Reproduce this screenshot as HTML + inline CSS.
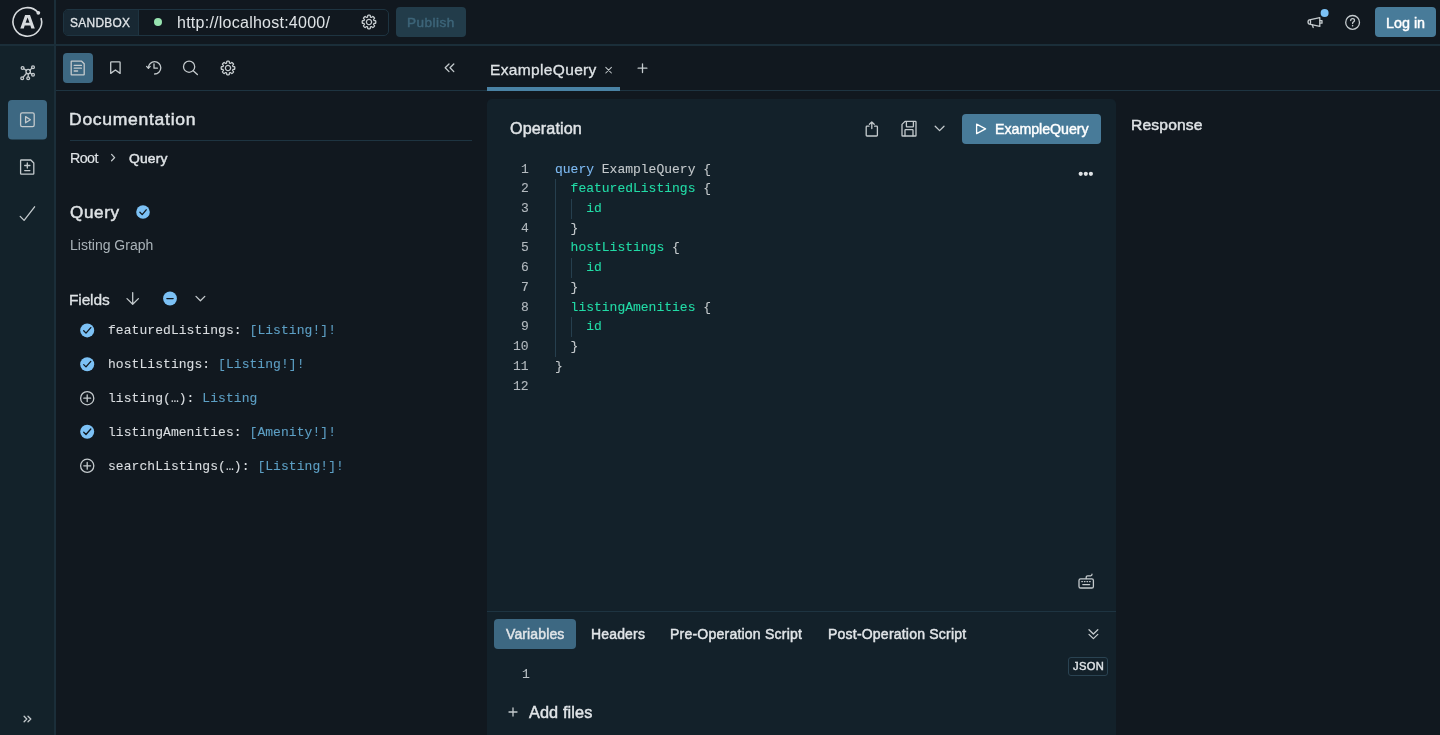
<!DOCTYPE html>
<html><head><meta charset="utf-8">
<style>
*{box-sizing:border-box;margin:0;padding:0}
html,body{width:1440px;height:735px;overflow:hidden;background:#11181f;font-family:"Liberation Sans",sans-serif;color:#dfe3e6}
.abs{position:absolute;white-space:nowrap;will-change:transform}
svg{position:absolute;overflow:visible}
.ic{fill:none;stroke:#c4cacd;stroke-width:1.3;stroke-linecap:round;stroke-linejoin:round}
.mono{font-family:"Liberation Mono",monospace;-webkit-text-stroke:0.1px currentColor}
.b{font-weight:bold}
.t{color:#5d9fc4}
</style></head><body>
<svg width="0" height="0" style="left:0;top:0"><defs><g id="gear" class="ic" stroke-width="1.3"><path d="M0.00 -6.80 0.33 -6.79 0.67 -6.77 1.00 -6.72 1.30 -6.53 1.38 -5.50 1.50 -4.93 1.72 -4.81 1.95 -4.71 2.18 -4.62 2.43 -4.55 2.92 -4.87 3.70 -5.54 4.05 -5.46 4.31 -5.26 4.57 -5.04 4.81 -4.81 5.04 -4.57 5.26 -4.31 5.46 -4.05 5.54 -3.70 4.87 -2.92 4.55 -2.43 4.62 -2.18 4.71 -1.95 4.81 -1.72 4.93 -1.50 5.50 -1.38 6.53 -1.30 6.72 -1.00 6.77 -0.67 6.79 -0.33 6.80 -0.00 6.79 0.33 6.77 0.67 6.72 1.00 6.53 1.30 5.50 1.38 4.93 1.50 4.81 1.72 4.71 1.95 4.62 2.18 4.55 2.43 4.87 2.92 5.54 3.70 5.46 4.05 5.26 4.31 5.04 4.57 4.81 4.81 4.57 5.04 4.31 5.26 4.05 5.46 3.70 5.54 2.92 4.87 2.43 4.55 2.18 4.62 1.95 4.71 1.72 4.81 1.50 4.93 1.38 5.50 1.30 6.53 1.00 6.72 0.67 6.77 0.33 6.79 0.00 6.80 -0.33 6.79 -0.67 6.77 -1.00 6.72 -1.30 6.53 -1.38 5.50 -1.50 4.93 -1.72 4.81 -1.95 4.71 -2.18 4.62 -2.43 4.55 -2.92 4.87 -3.70 5.54 -4.05 5.46 -4.31 5.26 -4.57 5.04 -4.81 4.81 -5.04 4.57 -5.26 4.31 -5.46 4.05 -5.54 3.70 -4.87 2.92 -4.55 2.43 -4.62 2.18 -4.71 1.95 -4.81 1.72 -4.93 1.50 -5.50 1.38 -6.53 1.30 -6.72 1.00 -6.77 0.67 -6.79 0.33 -6.80 0.00 -6.79 -0.33 -6.77 -0.67 -6.72 -1.00 -6.53 -1.30 -5.50 -1.38 -4.93 -1.50 -4.81 -1.72 -4.71 -1.95 -4.62 -2.18 -4.55 -2.43 -4.87 -2.92 -5.54 -3.70 -5.46 -4.05 -5.26 -4.31 -5.04 -4.57 -4.81 -4.81 -4.57 -5.04 -4.31 -5.26 -4.05 -5.46 -3.70 -5.54 -2.92 -4.87 -2.43 -4.55 -2.18 -4.62 -1.95 -4.71 -1.72 -4.81 -1.50 -4.93 -1.38 -5.50 -1.30 -6.53 -1.00 -6.72 -0.67 -6.77 -0.33 -6.79Z"/><circle cx="0" cy="0" r="2.6"/></g></defs></svg>
<!-- frame -->
<div class="abs" style="left:0;top:44px;width:1440px;height:2px;background:#1b2e39"></div>
<div class="abs" style="left:0;top:46px;width:54px;height:689px;background:#13222a"></div>
<div class="abs" style="left:54px;top:0;width:2px;height:735px;background:#1b2e39"></div>

<!-- logo -->
<svg style="left:0;top:0" width="55" height="44" viewBox="0 0 55 44">
  <path d="M41.05 17.96 A14.3 14.3 0 1 1 38.25 12.71" fill="none" stroke="#d7dbde" stroke-width="1.6"/>
  <circle cx="38.3" cy="12.8" r="1.9" fill="#d7dbde"/>
  <path d="M20.3 28.6 L25.1 15 L30 15 L34.8 28.6 L31.3 28.6 L30.4 25.6 L24.7 25.6 L23.8 28.6 Z M25.6 22.8 L29.5 22.8 L27.55 17.4 Z" fill="#d7dbde" fill-rule="evenodd"/>
</svg>

<!-- left nav icons -->
<svg style="left:0;top:45px" width="55" height="200" viewBox="0 45 55 200">
  <g class="ic" stroke-width="1.1">
    <circle cx="28.2" cy="71.6" r="2.2"/>
    <circle cx="22.6" cy="68.0" r="1.4"/><circle cx="33" cy="67.2" r="1.4"/>
    <circle cx="33" cy="74.8" r="1.4"/><circle cx="28.2" cy="78.2" r="1.4"/><circle cx="22.2" cy="78.2" r="1.4"/>
    <path d="M23.8 68.8 L26.4 70.4 M31.8 68.1 L29.9 70.3 M31.8 74.1 L30.1 72.9 M28.2 73.8 L28.2 76.8 M23.2 77.1 L26.6 73.2"/>
  </g>
  <rect x="8" y="100" width="39" height="39.5" rx="4" fill="#3d6882"/>
  <g class="ic" stroke-width="1.2">
    <rect x="20.6" y="112.8" width="13.6" height="13.8" rx="1.6"/>
    <path d="M25.6 116.6 L30.4 119.7 L25.6 122.8 Z"/>
    <path d="M21.2 160 L30.8 160 L33.8 163 L33.8 173.6 Q33.8 174.2 33.2 174.2 L21.2 174.2 Q20.6 174.2 20.6 173.6 L20.6 160.6 Q20.6 160 21.2 160 Z"/>
    <path d="M27.3 162.9 L27.3 168.1 M24.7 165.5 L29.9 165.5 M24.7 170.6 L29.9 170.6"/>
    <path d="M20.2 216.4 L24.1 220.4 L34.6 206.8"/>
  </g>
</svg>
<svg style="left:0;top:700px" width="55" height="35" viewBox="0 700 55 35">
  <g class="ic" stroke-width="1.2"><path d="M24.1 716.2 L26.8 719 L24.1 721.8 M28 716.2 L30.8 719 L28 721.8"/></g>
</svg>

<!-- SANDBOX url box -->
<div class="abs" style="left:63px;top:9px;width:326px;height:27px;border:1px solid #1e3441;border-radius:5px;overflow:hidden">
  <div class="abs" style="left:0;top:0;width:75px;height:25px;background:#182833;border-right:1px solid #1e3441"></div>
</div>
<div class="abs" style="left:154px;top:18px;width:8px;height:8px;border-radius:50%;background:#97e3b0"></div>
<div class="abs" style="left:177px;top:14px;font-size:16px;line-height:18px;letter-spacing:0.25px;color:#dfe3e6">http://localhost:4000/</div>
<svg style="left:368.75px;top:22px" width="1" height="1"><use href="#gear"/></svg>
<div class="abs" style="left:396px;top:7px;width:70px;height:30px;border-radius:4px;background:#223c4a"></div>

<!-- header right -->
<svg style="left:1300px;top:5px" width="65" height="35" viewBox="1300 5 65 35">
  <g class="ic" stroke-width="1.2">
    <path d="M1310.5 19.6 L1319.8 17.6 L1319.8 26.4 L1310.5 24.3 Z"/>
    <path d="M1310.5 19.6 Q1308 19.6 1308 21.95 Q1308 24.3 1310.5 24.3"/>
    <path d="M1320 20.6 L1322 20.6 L1322 23.2 L1320 23.2"/>
    <path d="M1312.3 24.8 L1313.2 27.5"/>
  </g>
  <circle cx="1324.6" cy="12.9" r="4" fill="#7cc1f5"/>
  <g class="ic" stroke-width="1.3">
    <circle cx="1352.6" cy="22.4" r="6.9"/>
    <path d="M1350.7 20.6 Q1350.7 18.6 1352.6 18.6 Q1354.5 18.6 1354.5 20.4 Q1354.5 21.5 1353.2 22.1 Q1352.6 22.4 1352.6 23.6"/>
  </g>
  <circle cx="1352.6" cy="25.8" r="0.8" fill="#d3d8db"/>
</svg>
<div class="abs" style="left:1375px;top:7px;width:61px;height:30px;border-radius:4px;background:#487b99"></div>

<!-- docs toolbar -->
<div class="abs" style="left:56px;top:90px;width:424px;height:1px;background:#1e3441"></div>
<div class="abs" style="left:63px;top:53px;width:30px;height:30px;border-radius:4px;background:#3d6882"></div>
<svg style="left:60px;top:50px" width="420" height="35" viewBox="60 50 420 35">
  <g class="ic" stroke-width="1.2">
    <path d="M71.6 61.2 L81.6 61.2 L84.2 63.8 L84.2 74.4 Q84.2 74.8 83.8 74.8 L71.6 74.8 Q71.2 74.8 71.2 74.4 L71.2 61.6 Q71.2 61.2 71.6 61.2 Z"/>
    <path d="M74.2 65.4 L81.4 65.4 M74.2 68.2 L81.4 68.2 M74.2 71 L77.6 71"/>
    <path d="M110.7 73.4 L110.7 62.6 Q110.7 61.8 111.5 61.8 L119.3 61.8 Q120.1 61.8 120.1 62.6 L120.1 73.4 L115.4 70 Z"/>
    <path d="M148.4 67.8 A6.2 6.2 0 1 1 154.6 74" />
    <path d="M146.6 66.4 L148.4 68.4 L150.2 66.4"/>
    <path d="M154 63.8 L154 68.2 L157.4 68.2"/>
    <circle cx="189.1" cy="66.7" r="5.6"/>
    <path d="M193.2 70.8 L197.4 74.6"/>
    <path d="M449 64 L445.2 67.8 L449 71.6 M453.8 64 L450 67.8 L453.8 71.6"/>
  </g>
</svg>
<svg style="left:228.2px;top:67.7px" width="1" height="1"><use href="#gear"/></svg>

<!-- docs content -->
<div class="abs" style="left:70px;top:140px;width:402px;height:1px;background:#1e3441"></div>
<svg style="left:100px;top:145px" width="30" height="25" viewBox="100 145 30 25"><g class="ic" stroke-width="1.1"><path d="M111.6 154.4 L114.6 157.6 L111.6 160.8"/></g></svg>
<svg style="left:130px;top:200px" width="30" height="25" viewBox="130 200 30 25">
  <circle cx="143" cy="212" r="6.8" fill="#7cc1f5"/>
  <path d="M139.9 212.3 L142.2 214.6 L146.2 209.8" fill="none" stroke="#11181f" stroke-width="1.3" stroke-linecap="round" stroke-linejoin="round"/>
</svg>
<div class="abs" style="left:70px;top:237px;font-size:14px;line-height:16px;color:#aab3b9">Listing Graph</div>
<svg style="left:120px;top:285px" width="100" height="30" viewBox="120 285 100 30">
  <g class="ic" stroke-width="1.2">
    <path d="M132.7 292.6 L132.7 304 M127 298.6 L132.7 304.2 L138.4 298.6"/>
    <path d="M196 296.4 L200.4 300.8 L204.8 296.4"/>
  </g>
  <circle cx="170" cy="298.5" r="6.9" fill="#7cc1f5"/>
  <path d="M166.9 298.6 L173.1 298.6" stroke="#11181f" stroke-width="1.4" stroke-linecap="round"/>
</svg>

<svg style="left:75px;top:318px" width="30" height="160" viewBox="75 318 30 160">
  <circle cx="87.2" cy="330.4" r="7" fill="#7cc1f5"/>
  <path d="M83.7 330.8 L86 333.1 L90.8 327.6" fill="none" stroke="#11181f" stroke-width="1.3" stroke-linecap="round" stroke-linejoin="round"/>
  <circle cx="87.2" cy="364.2" r="7" fill="#7cc1f5"/>
  <path d="M83.7 364.6 L86 366.9 L90.8 361.4" fill="none" stroke="#11181f" stroke-width="1.3" stroke-linecap="round" stroke-linejoin="round"/>
  <circle cx="87.2" cy="431.8" r="7" fill="#7cc1f5"/>
  <path d="M83.7 432.2 L86 434.5 L90.8 429" fill="none" stroke="#11181f" stroke-width="1.3" stroke-linecap="round" stroke-linejoin="round"/>
  <g class="ic" stroke-width="1.2">
    <circle cx="87.2" cy="398.2" r="6.6"/><path d="M87.2 394.8 L87.2 401.6 M83.8 398.2 L90.6 398.2"/>
    <circle cx="87.2" cy="465.8" r="6.6"/><path d="M87.2 462.4 L87.2 469.2 M83.8 465.8 L90.6 465.8"/>
  </g>
</svg>
<div class="abs mono" style="left:108px;top:322px;font-size:13px;line-height:18px;letter-spacing:0.06px;color:#d9dde0">featuredListings: <span class="t">[Listing!]!</span></div>
<div class="abs mono" style="left:108px;top:356px;font-size:13px;line-height:18px;letter-spacing:0.06px;color:#d9dde0">hostListings: <span class="t">[Listing!]!</span></div>
<div class="abs mono" style="left:108px;top:390px;font-size:13px;line-height:18px;letter-spacing:0.06px;color:#d9dde0">listing(…): <span class="t">Listing</span></div>
<div class="abs mono" style="left:108px;top:424px;font-size:13px;line-height:18px;letter-spacing:0.06px;color:#d9dde0">listingAmenities: <span class="t">[Amenity!]!</span></div>
<div class="abs mono" style="left:108px;top:458px;font-size:13px;line-height:18px;letter-spacing:0.06px;color:#d9dde0">searchListings(…): <span class="t">[Listing!]!</span></div>

<!-- tabs -->
<div class="abs" style="left:480px;top:90px;width:960px;height:1px;background:#1e3441"></div>
<svg style="left:600px;top:55px" width="60" height="25" viewBox="600 55 60 25">
  <g class="ic" stroke-width="1.2">
    <path d="M605.8 67.4 L611.4 73 M611.4 67.4 L605.8 73" stroke-width="1.05"/>
    <path d="M642.5 63.8 L642.5 72.6 M638.1 68.2 L646.9 68.2"/>
  </g>
</svg>
<div class="abs" style="left:487px;top:87px;width:133px;height:4px;background:#4a82a4"></div>

<!-- operation panel -->
<div class="abs" style="left:487px;top:99px;width:629px;height:636px;background:#13212a;border-radius:5px 5px 0 0"></div>
<svg style="left:850px;top:110px" width="110" height="35" viewBox="850 110 110 35">
  <g class="ic" stroke-width="1.2">
    <path d="M869 126.2 L867 126.2 Q866.2 126.2 866.2 127 L866.2 135.2 Q866.2 136 867 136 L876.6 136 Q877.4 136 877.4 135.2 L877.4 127 Q877.4 126.2 876.6 126.2 L874.6 126.2"/>
    <path d="M871.8 128.6 L871.8 122 M869.4 124.3 L871.8 121.9 L874.2 124.3"/>
    <path d="M905 121.4 L915.4 121.4 Q916 121.4 916 122 L916 135.4 Q916 136 915.4 136 L902.6 136 Q902 136 902 135.4 L902 124.4 Z"/>
    <path d="M906.4 121.6 L906.4 126.2 Q906.4 126.8 907 126.8 L912.8 126.8 Q913.4 126.8 913.4 126.2 L913.4 121.6"/>
    <path d="M905 135.8 L905 130.2 Q905 129.6 905.6 129.6 L912.4 129.6 Q913 129.6 913 130.2 L913 135.8"/>
    <path d="M935.2 126.2 L939.6 130.6 L944 126.2"/>
  </g>
</svg>
<div class="abs" style="left:962px;top:114px;width:139px;height:30px;border-radius:4px;background:#487b99"></div>
<svg style="left:970px;top:118px" width="20" height="20" viewBox="970 118 20 20">
  <path d="M976.6 124.2 L985.6 128.9 L976.6 133.6 Z" fill="none" stroke="#fff" stroke-width="1.3" stroke-linejoin="round"/>
</svg>

<!-- more dots -->
<svg style="left:1070px;top:160px" width="30" height="25" viewBox="1070 160 30 25">
  <circle cx="1080.7" cy="173.8" r="2.1" fill="#dfe3e6"/><circle cx="1085.8" cy="173.8" r="2.1" fill="#dfe3e6"/><circle cx="1090.9" cy="173.8" r="2.1" fill="#dfe3e6"/>
</svg>

<!-- code -->
<div class="abs mono" style="left:521.2px;top:159.50px;font-size:13px;line-height:19.73px;color:#b3babf">1</div>
<div class="abs mono" style="left:555px;top:159.50px;font-size:13px;line-height:19.73px"><span style="color:#7db9f2">query</span><span style="color:#c3c8cb">&nbsp;ExampleQuery&nbsp;{</span></div>
<div class="abs mono" style="left:521.2px;top:179.23px;font-size:13px;line-height:19.73px;color:#b3babf">2</div>
<div class="abs mono" style="left:555px;top:179.23px;font-size:13px;line-height:19.73px"><span style="color:#c3c8cb">&nbsp;&nbsp;</span><span style="color:#22dba6">featuredListings</span><span style="color:#c3c8cb">&nbsp;{</span></div>
<div class="abs mono" style="left:521.2px;top:198.96px;font-size:13px;line-height:19.73px;color:#b3babf">3</div>
<div class="abs mono" style="left:555px;top:198.96px;font-size:13px;line-height:19.73px"><span style="color:#c3c8cb">&nbsp;&nbsp;&nbsp;&nbsp;</span><span style="color:#22dba6">id</span></div>
<div class="abs mono" style="left:521.2px;top:218.69px;font-size:13px;line-height:19.73px;color:#b3babf">4</div>
<div class="abs mono" style="left:555px;top:218.69px;font-size:13px;line-height:19.73px"><span style="color:#c3c8cb">&nbsp;&nbsp;}</span></div>
<div class="abs mono" style="left:521.2px;top:238.42px;font-size:13px;line-height:19.73px;color:#b3babf">5</div>
<div class="abs mono" style="left:555px;top:238.42px;font-size:13px;line-height:19.73px"><span style="color:#c3c8cb">&nbsp;&nbsp;</span><span style="color:#22dba6">hostListings</span><span style="color:#c3c8cb">&nbsp;{</span></div>
<div class="abs mono" style="left:521.2px;top:258.15px;font-size:13px;line-height:19.73px;color:#b3babf">6</div>
<div class="abs mono" style="left:555px;top:258.15px;font-size:13px;line-height:19.73px"><span style="color:#c3c8cb">&nbsp;&nbsp;&nbsp;&nbsp;</span><span style="color:#22dba6">id</span></div>
<div class="abs mono" style="left:521.2px;top:277.88px;font-size:13px;line-height:19.73px;color:#b3babf">7</div>
<div class="abs mono" style="left:555px;top:277.88px;font-size:13px;line-height:19.73px"><span style="color:#c3c8cb">&nbsp;&nbsp;}</span></div>
<div class="abs mono" style="left:521.2px;top:297.61px;font-size:13px;line-height:19.73px;color:#b3babf">8</div>
<div class="abs mono" style="left:555px;top:297.61px;font-size:13px;line-height:19.73px"><span style="color:#c3c8cb">&nbsp;&nbsp;</span><span style="color:#22dba6">listingAmenities</span><span style="color:#c3c8cb">&nbsp;{</span></div>
<div class="abs mono" style="left:521.2px;top:317.34px;font-size:13px;line-height:19.73px;color:#b3babf">9</div>
<div class="abs mono" style="left:555px;top:317.34px;font-size:13px;line-height:19.73px"><span style="color:#c3c8cb">&nbsp;&nbsp;&nbsp;&nbsp;</span><span style="color:#22dba6">id</span></div>
<div class="abs mono" style="left:513.4px;top:337.07px;font-size:13px;line-height:19.73px;color:#b3babf">10</div>
<div class="abs mono" style="left:555px;top:337.07px;font-size:13px;line-height:19.73px"><span style="color:#c3c8cb">&nbsp;&nbsp;}</span></div>
<div class="abs mono" style="left:513.4px;top:356.80px;font-size:13px;line-height:19.73px;color:#b3babf">11</div>
<div class="abs mono" style="left:555px;top:356.80px;font-size:13px;line-height:19.73px"><span style="color:#c3c8cb">}</span></div>
<div class="abs mono" style="left:513.4px;top:376.53px;font-size:13px;line-height:19.73px;color:#b3babf">12</div>
<div class="abs" style="left:555px;top:178.7px;width:1px;height:177.6px;background:#263f4e"></div>
<div class="abs" style="left:570.6px;top:198.5px;width:1px;height:19.7px;background:#263f4e"></div>
<div class="abs" style="left:570.6px;top:257.6px;width:1px;height:19.7px;background:#263f4e"></div>
<div class="abs" style="left:570.6px;top:316.8px;width:1px;height:19.7px;background:#263f4e"></div>

<!-- keyboard icon -->
<svg style="left:1070px;top:568px" width="30" height="25" viewBox="1070 568 30 25">
  <g class="ic" stroke-width="1.1">
    <rect x="1079" y="578.8" width="14.4" height="9.2" rx="1.6"/>
    <path d="M1086.2 578.6 L1086.2 577 Q1086.2 575.8 1087.6 575.8 L1090.6 575.8 Q1092 575.6 1092 574.2"/>
    <path d="M1081.8 581.6 L1082.4 581.6 M1084.4 581.6 L1085 581.6 M1087 581.6 L1087.6 581.6 M1089.6 581.6 L1090.2 581.6 M1082.8 584.6 L1089.6 584.6"/>
  </g>
</svg>

<!-- bottom -->
<div class="abs" style="left:487px;top:611px;width:629px;height:1px;background:#1e3441"></div>
<div class="abs" style="left:494px;top:619px;width:82px;height:30px;border-radius:4px;background:#3d6882"></div>
<svg style="left:1080px;top:620px" width="30" height="25" viewBox="1080 620 30 25">
  <g class="ic" stroke-width="1.2"><path d="M1089 629.8 L1093.4 634 L1097.8 629.8 M1089 634.4 L1093.4 638.6 L1097.8 634.4"/></g>
</svg>
<div class="abs" style="left:1068px;top:657px;width:40px;height:19px;border:1px solid #2a4352;border-radius:3px"></div>
<div class="abs mono" style="left:522px;top:666px;font-size:13px;line-height:18px;color:#b9c0c5">1</div>
<svg style="left:500px;top:700px" width="30" height="25" viewBox="500 700 30 25">
  <g class="ic" stroke-width="1.2"><path d="M513 708 L513 716 M509 712 L517 712"/></g>
</svg>

<div class="abs" id="sandbox" style="left:70.20px;top:17.63px;font-size:11.90px;line-height:1;letter-spacing:0.317px;color:#e1e5e8;-webkit-text-stroke:0.3px #e1e5e8">SANDBOX</div>
<div class="abs" id="publish" style="left:406.76px;top:16.58px;font-size:12.90px;line-height:1;letter-spacing:0.444px;color:#3d6579;transform:scaleX(1.0509);transform-origin:0 0;-webkit-text-stroke:0.45px #3d6579">Publish</div>
<div class="abs" id="login" style="left:1385.92px;top:15.60px;font-size:14.35px;line-height:1;letter-spacing:0.000px;color:#ffffff;-webkit-text-stroke:0.45px #ffffff">Log in</div>
<div class="abs" id="doc" style="left:69.42px;top:111.83px;font-size:16.74px;line-height:1;letter-spacing:0.667px;color:#dfe3e6;transform:scaleX(1.0491);transform-origin:0 0;-webkit-text-stroke:0.45px #dfe3e6">Documentation</div>
<div class="abs" id="root" style="left:69.74px;top:150.54px;font-size:14.30px;line-height:1;letter-spacing:-0.583px;color:#dfe3e6;-webkit-text-stroke:0.15px #dfe3e6">Root</div>
<div class="abs" id="bcq" style="left:129.00px;top:151.64px;font-size:13.60px;line-height:1;letter-spacing:0.172px;color:#dfe3e6;transform:scaleX(1.0182);transform-origin:0 0;-webkit-text-stroke:0.45px #dfe3e6">Query</div>
<div class="abs" id="qh" style="left:70.40px;top:203.92px;font-size:16.16px;line-height:1;letter-spacing:0.578px;color:#dfe3e6;transform:scaleX(1.0605);transform-origin:0 0;-webkit-text-stroke:0.45px #dfe3e6">Query</div>
<div class="abs" id="fields" style="left:69.04px;top:291.88px;font-size:15.50px;line-height:1;letter-spacing:-0.140px;color:#dfe3e6;-webkit-text-stroke:0.3px #dfe3e6">Fields</div>
<div class="abs" id="tab" style="left:490.04px;top:61.70px;font-size:15.15px;line-height:1;letter-spacing:0.326px;color:#dfe3e6;transform:scaleX(1.0256);transform-origin:0 0;-webkit-text-stroke:0.3px #dfe3e6">ExampleQuery</div>
<div class="abs" id="op" style="left:509.56px;top:120.96px;font-size:16.00px;line-height:1;letter-spacing:0.087px;color:#dfe3e6;transform:scaleX(1.0114);transform-origin:0 0;-webkit-text-stroke:0.45px #dfe3e6">Operation</div>
<div class="abs" id="resp" style="left:1130.80px;top:116.88px;font-size:15.50px;line-height:1;letter-spacing:0.148px;color:#dfe3e6;transform:scaleX(1.0102);transform-origin:0 0;-webkit-text-stroke:0.45px #dfe3e6">Response</div>
<div class="abs" id="run" style="left:995.42px;top:121.66px;font-size:14.22px;line-height:1;letter-spacing:-0.038px;color:#ffffff;-webkit-text-stroke:0.45px #ffffff">ExampleQuery</div>
<div class="abs" id="vars" style="left:506.38px;top:628.12px;font-size:13.80px;line-height:1;letter-spacing:0.130px;color:#e1e5e8;transform:scaleX(1.0134);transform-origin:0 0;-webkit-text-stroke:0.45px #e1e5e8">Variables</div>
<div class="abs" id="hdrs" style="left:590.86px;top:628.12px;font-size:13.80px;line-height:1;letter-spacing:0.173px;color:#e1e5e8;transform:scaleX(1.0127);transform-origin:0 0;-webkit-text-stroke:0.45px #e1e5e8">Headers</div>
<div class="abs" id="pre" style="left:670.48px;top:628.12px;font-size:13.80px;line-height:1;letter-spacing:0.199px;color:#e1e5e8;transform:scaleX(1.0182);transform-origin:0 0;-webkit-text-stroke:0.45px #e1e5e8">Pre-Operation Script</div>
<div class="abs" id="post" style="left:828.36px;top:628.12px;font-size:13.80px;line-height:1;letter-spacing:0.189px;color:#e1e5e8;transform:scaleX(1.0182);transform-origin:0 0;-webkit-text-stroke:0.45px #e1e5e8">Post-Operation Script</div>
<div class="abs" id="json" style="left:1072.56px;top:661.30px;font-size:10.75px;line-height:1;letter-spacing:0.337px;color:#e1e5e8;transform:scaleX(1.0373);transform-origin:0 0;-webkit-text-stroke:0.4px #e1e5e8">JSON</div>
<div class="abs" id="addf" style="left:528.56px;top:703.73px;font-size:16.30px;line-height:1;letter-spacing:0.105px;color:#e1e5e8;-webkit-text-stroke:0.45px #e1e5e8">Add files</div>
</body></html>
